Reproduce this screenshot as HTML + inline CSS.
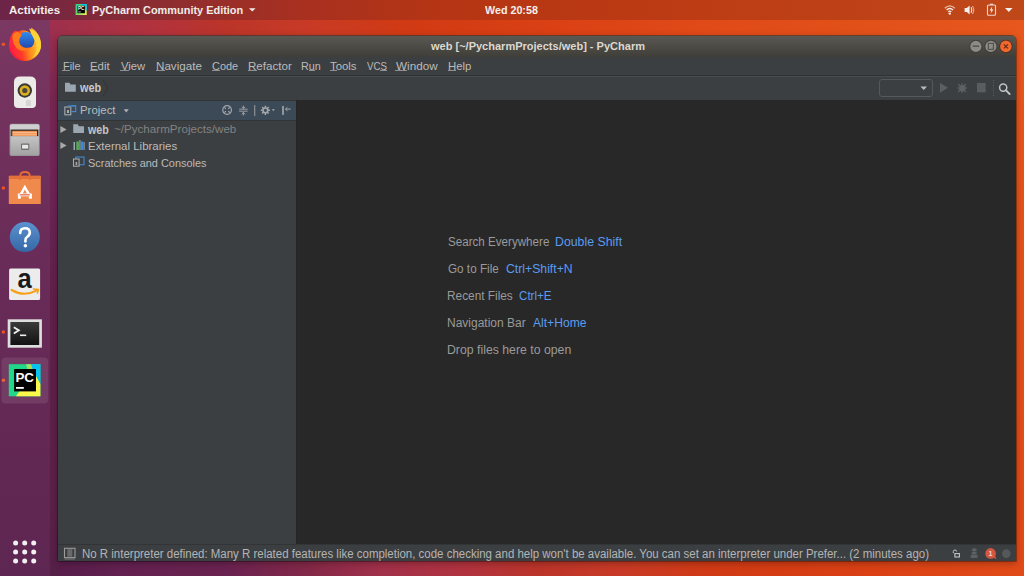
<!DOCTYPE html>
<html><head><meta charset="utf-8">
<style>
*{margin:0;padding:0;box-sizing:border-box}
html,body{width:1024px;height:576px;overflow:hidden}
body{position:relative;font-family:"Liberation Sans",sans-serif;
background:linear-gradient(60deg,#4e1a46 0%,#642150 10%,#6a2250 17%,#842848 23%,#a0304a 28%,#b03240 34%,#bb3429 40%,#c83a26 46%,#d03a14 53%,#da4014 64%,#e04a18 75%,#e2521a 90%,#e8581e 100%);}
.a{position:absolute}
.t{position:absolute;white-space:nowrap;line-height:1;transform-origin:0 0}
#topbar{left:0;top:0;width:1024px;height:20px;background:linear-gradient(90deg,#6c2448 0px,#8a2c32 150px,#a83020 300px,#b53514 440px,#bd3c14 700px,#bf4819 1024px)}
#lstrip{left:50px;top:20px;width:8px;height:556px;background:linear-gradient(#a2304d 0px,#8c2a50 40px,#782650 80px,#742558 137px,#652250 230px,#612048 280px,#5c2048 480px,#552048 556px)}
#dock{left:0;top:20px;width:50px;height:556px;background:linear-gradient(#7a3862,#6a2c58 40%,#5e2652)}
#win{left:58px;top:36px;width:958px;height:525px;background:#3c3f41;border-radius:5px 5px 0 0;box-shadow:0 0 0 1px rgba(0,0,0,0.28),0 2px 7px rgba(0,0,0,0.3)}
#title{left:58px;top:36px;width:958px;height:21px;background:linear-gradient(#5a5852,#3f3e39);border-radius:4px 4px 0 0}
#ttop{left:61px;top:35px;width:952px;height:1px;background:rgba(70,68,62,0.55)}
#menu{left:58px;top:57px;width:958px;height:19px;background:#3c3f41;border-bottom:1px solid #2f3132}
#nav{left:58px;top:76px;width:958px;height:24px;background:#3c3f41;border-top:1px solid #4a4c4d}
#projhdr{left:58px;top:100px;width:238px;height:21px;background:#3c4957;border-top:1px solid #333537;border-bottom:1px solid #323436}
#proj{left:58px;top:121px;width:238px;height:423px;background:#3c3f41}
#editor{left:296px;top:100px;width:720px;height:444px;background:#282828;border-left:1px solid #242626}
#status{left:58px;top:544px;width:958px;height:17px;background:#3c3f41;border-top:1px solid #323435}
</style></head><body>
<div id="topbar" class="a"></div>
<div id="lstrip" class="a"></div>
<div id="dock" class="a"></div>
<div id="win" class="a"></div>
<div id="title" class="a"></div>
<div id="ttop" class="a"></div>
<div id="menu" class="a"></div>
<div id="nav" class="a"></div>
<div id="projhdr" class="a"></div>
<div id="proj" class="a"></div>
<div id="editor" class="a"></div>
<div id="status" class="a"></div>
<svg class="a" style="left:0;top:0" width="1024" height="576" viewBox="0 0 1024 576">
<defs>
<linearGradient id="ffg" x1="0" y1="0.6" x2="1" y2="0.4">
<stop offset="0" stop-color="#ff1f45"/><stop offset="0.35" stop-color="#ff3a2a"/><stop offset="0.6" stop-color="#ff8a1a"/><stop offset="1" stop-color="#ffd83a"/></linearGradient>
<linearGradient id="blu" x1="0" y1="0" x2="0" y2="1"><stop offset="0" stop-color="#2f8cf0"/><stop offset="1" stop-color="#2244a8"/></linearGradient>
<linearGradient id="helpg" x1="0" y1="0" x2="0" y2="1"><stop offset="0" stop-color="#5c92cf"/><stop offset="1" stop-color="#3467a6"/></linearGradient>
<linearGradient id="pcg" x1="0" y1="0" x2="1" y2="1"><stop offset="0" stop-color="#21d789"/><stop offset="0.5" stop-color="#6fd66a"/><stop offset="1" stop-color="#fcf84a"/></linearGradient>
<linearGradient id="termg" x1="0" y1="0" x2="0" y2="1"><stop offset="0" stop-color="#3a3a3a"/><stop offset="1" stop-color="#121212"/></linearGradient>
<linearGradient id="filesg" x1="0" y1="0" x2="0" y2="1"><stop offset="0" stop-color="#c4c4c4"/><stop offset="1" stop-color="#a2a2a2"/></linearGradient>
</defs>
<!-- dock running dots -->
<g fill="#e95420">
<circle cx="3.4" cy="44.3" r="1.8"/><circle cx="3.4" cy="188" r="1.8"/><circle cx="3.4" cy="332" r="1.8"/><circle cx="3.4" cy="380.2" r="1.8"/>
</g>
<!-- firefox -->
<g>
<path d="M12.5 33 C10 37 9 41 9 45 A16 16 0 0 0 41 45 C41 37 37 31 31 27.5 C32 31 31.5 33 30 33 C27 30 22 29.5 18.5 31.5 C16 30 14 30.5 12.5 33 Z" fill="url(#ffg)"/>
<circle cx="26" cy="40.5" r="8.5" fill="url(#blu)"/>
<path d="M29 28.5 C36 31 41 37 41 45 C41 51 37 56 32 58 C37 53 38 46 35 41 C33 37 31 33 29 28.5 Z" fill="#ffd23a"/>
<path d="M12.5 35 C14.5 32 17 31.5 19 32.5 C20.5 34 22.5 34.5 21 36.5 C19 38.5 18.5 42 20.5 45 C23 48 28 48.5 31 47 C28.5 50.5 23 52 18.5 49.5 C14.5 47 12 41 12.5 35 Z" fill="#ff7a1a"/>
<path d="M9.5 42 C10 52 16 58 24 60.5 C16 60 10 54 9.2 46 Z" fill="#ff1a3a"/>
</g>
<!-- rhythmbox -->
<g>
<path d="M14 82 Q14 76.5 20 76.5 L30 76.5 Q36 76.5 36 82 L36 104 Q36 108 32 108 L18 108 Q14 108 14 104 Z" fill="#ecebea"/>
<circle cx="24.8" cy="90.5" r="7.2" fill="#3a3834"/>
<circle cx="24.8" cy="90.5" r="5.2" fill="#d8b020"/>
<circle cx="24.8" cy="90.5" r="2.6" fill="#4a4640"/>
<rect x="26" y="100" width="5" height="6" rx="1" fill="#d6d5d3"/>
</g>
<!-- files -->
<g>
<rect x="9.5" y="123.8" width="30.3" height="32.2" rx="2" fill="#8e8e8e"/>
<rect x="10" y="124.2" width="29.3" height="5.6" rx="1.6" fill="#cfcfcf"/>
<rect x="11.3" y="129.6" width="26.7" height="6.8" fill="#2e2622"/>
<rect x="12.3" y="130.8" width="24.7" height="5.6" fill="#f09050"/>
<rect x="12.3" y="132.4" width="24.7" height="0.8" fill="#fbd2b0"/>
<rect x="12.3" y="134.4" width="24.7" height="0.8" fill="#f8c098"/>
<rect x="10.4" y="136.2" width="28.5" height="19.2" fill="url(#filesg)"/>
<rect x="21" y="143.4" width="8.3" height="6.6" rx="1.2" fill="#6e6e6e"/>
<rect x="22.1" y="144.8" width="6.1" height="3.8" fill="#e8e8e8"/>
</g>
<!-- software -->
<g>
<rect x="8.8" y="176" width="32" height="28" fill="#f08a4c"/>
<rect x="9.3" y="175.6" width="31" height="3.4" fill="#e2703a"/>
<path d="M20.2 180 L20.2 176 Q20.2 172 25 172 Q29.8 172 29.8 176 L29.8 180" fill="none" stroke="#e66c34" stroke-width="1.8"/>
<path d="M19.6 194 L24.8 184.8 L30.2 194 L27.2 194 L24.8 189.4 L22.6 194 Z" fill="#fff"/>
<rect x="17.8" y="193.6" width="14.2" height="2.6" rx="0.6" fill="#fff"/>
<rect x="19.8" y="194.3" width="10" height="1.1" fill="#e85030"/>
<rect x="17.8" y="196" width="3.2" height="2.8" rx="1" fill="#fff"/>
<rect x="28.8" y="196" width="3.2" height="2.8" rx="1" fill="#fff"/>
</g>
<!-- help -->
<g>
<circle cx="24.8" cy="237.1" r="15" fill="url(#helpg)"/>
<path d="M20.2 233 Q20.2 228.3 25 228.3 Q29.8 228.3 29.8 232.6 Q29.8 235.3 27 237 Q25.4 238 25.4 240.5 L25.4 241.5" fill="none" stroke="#fff" stroke-width="2.6" stroke-linecap="round"/>
<circle cx="25.4" cy="245.8" r="1.8" fill="#fff"/>
</g>
<!-- amazon -->
<g>
<rect x="9.1" y="268.6" width="31" height="31.4" rx="1.5" fill="#ececec"/>
<text x="17.6" y="288.4" font-family="Liberation Sans" font-weight="bold" font-size="28" textLength="14.2" lengthAdjust="spacingAndGlyphs" fill="#1a1a1a">a</text>
<path d="M11.6 290 Q24 297.2 36.4 290.6" fill="none" stroke="#f7a11a" stroke-width="2.2" stroke-linecap="round"/>
<path d="M33.5 289 L38.3 289.5 L37.5 293" fill="none" stroke="#f7a11a" stroke-width="1.6" stroke-linecap="round"/>
</g>
<!-- terminal -->
<g>
<rect x="7.7" y="319.3" width="34.2" height="28.4" fill="#dedede"/>
<rect x="10.4" y="322" width="28.8" height="23" fill="url(#termg)"/>
<path d="M13.8 327.2 L18.8 330.3 L13.8 333.4" fill="none" stroke="#f0f0f0" stroke-width="1.8"/>
<rect x="20" y="334.5" width="6.2" height="1.6" fill="#f0f0f0"/>
</g>
<!-- pycharm active -->
<rect x="1.5" y="357.4" width="46.7" height="46.2" rx="4" fill="#ffffff" fill-opacity="0.09"/>
<g>
<rect x="8.8" y="364.2" width="31.6" height="32.1" fill="#21d789"/>
<path d="M26 364.2 L40.4 364.2 L40.4 384 L33 371 Z" fill="#07c3f2"/>
<path d="M33 371 L40.4 384 L40.4 396.3 L16 396.3 Z" fill="#fcf84a"/>
<path d="M26 364.2 L31 364.2 L33 371 L28.5 372 Z" fill="#a8e05a"/>
<rect x="14.1" y="369" width="21.9" height="22.4" fill="#000"/>
<text x="15.4" y="382" font-family="Liberation Sans" font-weight="bold" font-size="13.6" fill="#fff" textLength="18.6" lengthAdjust="spacingAndGlyphs">PC</text>
<rect x="16" y="387" width="7.8" height="1.8" fill="#fff"/>
</g>
<!-- app grid -->
<g fill="#f4f0f2">
<circle cx="15.6" cy="543" r="2.5"/><circle cx="24.7" cy="543" r="2.5"/><circle cx="33.7" cy="543" r="2.5"/>
<circle cx="15.6" cy="552" r="2.5"/><circle cx="24.7" cy="552" r="2.5"/><circle cx="33.7" cy="552" r="2.5"/>
<circle cx="15.6" cy="561" r="2.5"/><circle cx="24.7" cy="561" r="2.5"/><circle cx="33.7" cy="561" r="2.5"/>
</g>
<!-- topbar icons -->
<g>
<rect x="75.6" y="4" width="11.1" height="11" fill="url(#pcg)"/>
<path d="M81.5 4 L86.7 4 L86.7 11 Z" fill="#07c3f2"/>
<rect x="77.5" y="5.8" width="7.4" height="7.4" fill="#000"/>
<text x="78" y="10.3" font-family="Liberation Sans" font-weight="bold" font-size="4.6" fill="#fff">PC</text>
<rect x="78.2" y="11.6" width="2.6" height="0.7" fill="#fff"/>
<path d="M249 8.2 L255.6 8.2 L252.3 11.6 Z" fill="#f0ece8"/>
<!-- wifi -->
<path d="M944.8 8.2 Q949.8 3.6 954.8 8.2" fill="none" stroke="#f2e6e0" stroke-width="1.3" opacity="0.75"/>
<path d="M946.6 10 Q949.8 7.2 953 10" fill="none" stroke="#f2eeea" stroke-width="1.4"/>
<path d="M948.3 11.7 Q949.8 10.5 951.3 11.7" fill="none" stroke="#f2eeea" stroke-width="1.4"/>
<circle cx="949.8" cy="13.6" r="1.2" fill="#f2eeea"/>
<!-- speaker -->
<path d="M964.6 8 L966.8 8 L969.6 5.4 L969.6 14.6 L966.8 12 L964.6 12 Z" fill="#f4f0ec"/>
<path d="M971 7.3 Q972.6 10 971 12.7" fill="none" stroke="#f4f0ec" stroke-width="1.1"/>
<path d="M972.6 6 Q975.2 10 972.6 14" fill="none" stroke="#eedad0" stroke-width="1.0" opacity="0.8"/>
<!-- battery -->
<rect x="987.5" y="5" width="8" height="10.2" rx="1" fill="none" stroke="#efd8cc" stroke-width="1.1"/>
<rect x="990" y="3.7" width="3" height="1.4" fill="#efd8cc"/>
<path d="M992.3 6.5 L989.6 10.5 L991.4 10.5 L990.6 13.6 L993.5 9.4 L991.7 9.4 Z" fill="#f4f0ec"/>
<path d="M1005 8 L1012.6 8 L1008.8 12 Z" fill="#f4f0ec"/>
</g>
<!-- window buttons -->
<g>
<circle cx="975.9" cy="46.4" r="6.6" fill="#3e3d38"/>
<circle cx="975.9" cy="46.4" r="5.6" fill="#8c8b86"/>
<rect x="972.6" y="45.4" width="6.6" height="1.6" fill="#5a5955"/>
<circle cx="990.9" cy="46.4" r="6.6" fill="#3e3d38"/>
<circle cx="990.9" cy="46.4" r="5.6" fill="#8c8b86"/>
<rect x="988.4" y="43.4" width="5" height="6" fill="none" stroke="#555450" stroke-width="1.2"/>
<circle cx="1005.9" cy="46.4" r="6.6" fill="#4a2a20"/>
<circle cx="1005.9" cy="46.4" r="5.8" fill="#f0682c"/>
<path d="M1003.9 44.4 L1007.9 48.4 M1007.9 44.4 L1003.9 48.4" stroke="#6a2a20" stroke-width="1.2"/>
</g>
<!-- nav bar -->
<g>
<path d="M65 82.7 L69.5 82.7 L70.5 84.5 L75.8 84.5 L75.8 91.8 L65 91.8 Z" fill="#9aa7b0"/>
<path d="M103 79.5 L107.7 88 L103 96.5" fill="none" stroke="#313335" stroke-width="1"/>
<rect x="879.5" y="79.5" width="53" height="17" rx="2.5" fill="#3c3f41" stroke="#56595b" stroke-width="1"/>
<path d="M920.5 86.5 L927 86.5 L923.75 90 Z" fill="#bbbbbb"/>
<path d="M940 83 L948 87.8 L940 92.7 Z" fill="#5c5e60"/>
<g stroke="#5e6062" stroke-width="1.1">
<path d="M958 84 L966 92 M966 84 L958 92 M962 83 L962 93 M957 88 L967 88"/>
</g>
<circle cx="962.3" cy="88.2" r="3.2" fill="#5e6062"/>
<rect x="977" y="83" width="8.7" height="9.3" fill="#5a5c5e"/>
<path d="M993.5 80 L993.5 96.7" stroke="#5a5d5f" stroke-width="1" stroke-dasharray="1 1.5"/>
<circle cx="1003.2" cy="87.6" r="3.6" fill="none" stroke="#c2c2c2" stroke-width="1.5"/>
<path d="M1005.8 90.2 L1009.6 94" stroke="#c2c2c2" stroke-width="1.9" stroke-linecap="round"/>
</g>
<!-- project header -->
<g>
<rect x="64.8" y="107" width="6" height="7.8" fill="none" stroke="#a8a8a8" stroke-width="1.1"/>
<rect x="67" y="110" width="2" height="3" fill="#a8a8a8"/>
<path d="M71.5 105.8 L75.7 105.8 L75.7 111.6 L71.5 111.6" fill="none" stroke="#4a8ad0" stroke-width="1.1"/>
<rect x="68" y="105.4" width="8" height="1.2" fill="#4a8ad0"/>
<path d="M123.7 109.2 L128.8 109.2 L126.25 112.4 Z" fill="#b0b0b0"/>
<circle cx="227.1" cy="110" r="4.3" fill="none" stroke="#a4a8ac" stroke-width="1.2"/>
<path d="M224.4 107.3 L225.9 108.8 M229.8 107.3 L228.3 108.8 M224.4 112.7 L225.9 111.2 M229.8 112.7 L228.3 111.2" stroke="#a4a8ac" stroke-width="1.2"/>
<path d="M239.2 109.2 L247.6 109.2 M239.2 111.2 L247.6 111.2 M243.4 105.6 L243.4 108.3 M243.4 112.1 L243.4 115.6 M241.7 106.9 L243.4 108.5 L245.1 106.9 M241.7 114.3 L243.4 112.6 L245.1 114.3" fill="none" stroke="#a4a8ac" stroke-width="0.9"/>
<path d="M254.7 105 L254.7 116" stroke="#8e9296" stroke-width="1.2"/>
<circle cx="265.4" cy="110.3" r="2.4" fill="none" stroke="#a4a8ac" stroke-width="1.5"/>
<path d="M268.00 110.30 L270.00 110.30 M267.24 112.14 L268.65 113.55 M265.40 112.90 L265.40 114.90 M263.56 112.14 L262.15 113.55 M262.80 110.30 L260.80 110.30 M263.56 108.46 L262.15 107.05 M265.40 107.70 L265.40 105.70 M267.24 108.46 L268.65 107.05 " stroke="#a4a8ac" stroke-width="1.5"/>
<path d="M271.8 109.3 L274.8 109.3 L273.3 111.2 Z" fill="#a4a8ac"/>
<rect x="282.2" y="106" width="1.6" height="8.9" fill="#a4a8ac"/>
<path d="M285.5 109.1 L290.7 109.1 M287.4 107.3 L285.5 109.1 L287.4 110.9" fill="none" stroke="#a4a8ac" stroke-width="1"/>
</g>
<!-- tree -->
<g>
<path d="M60.4 126 L66.6 129.5 L60.4 133 Z" fill="#a9a9a9"/>
<path d="M60.4 142.1 L66.6 145.6 L60.4 149.1 Z" fill="#a9a9a9"/>
<path d="M73.2 124.3 L77.8 124.3 L78.8 126.2 L84 126.2 L84 133 L73.2 133 Z" fill="#9aa7b0"/>
<rect x="73.5" y="142" width="1.5" height="8" fill="#9aa7b0"/>
<rect x="76.3" y="141.5" width="2.6" height="8.5" fill="#58a858"/>
<rect x="79.4" y="140" width="1.1" height="10" fill="#9aa7b0"/>
<rect x="80.8" y="141.5" width="2.4" height="8.5" fill="#3a8ad8"/>
<rect x="83.6" y="142" width="1" height="8" fill="#9aa7b0"/>
<rect x="75.8" y="157" width="8.2" height="7.7" fill="none" stroke="#3f8ad0" stroke-width="1.1"/>
<rect x="73.5" y="159" width="5.6" height="7.2" fill="#3c3f41" stroke="#a9a9a9" stroke-width="1.1"/>
<rect x="75.6" y="162" width="1.6" height="3" fill="#a9a9a9"/>
</g>
<!-- status bar -->
<g>
<rect x="64.5" y="548.3" width="10.5" height="9.3" fill="none" stroke="#9a9a9a" stroke-width="1.1"/>
<rect x="67.3" y="549.2" width="5" height="7.5" fill="#6a6a6a"/>
<rect x="64.5" y="558.6" width="10.5" height="0.8" fill="#8a8a8a"/>
<path d="M953.3 553.2 L953.3 551.6 Q953.3 550 955 550 Q956.7 550 956.7 551.5" fill="none" stroke="#c4c4c4" stroke-width="1"/>
<rect x="954.9" y="553.6" width="4.5" height="3.4" fill="none" stroke="#c4c4c4" stroke-width="1.1"/>
<circle cx="974.2" cy="549.9" r="1.8" fill="#606264"/>
<rect x="971.3" y="549.6" width="5.8" height="1" fill="#606264"/>
<rect x="971.8" y="552" width="4.8" height="2.6" fill="#5e6062"/>
<rect x="970.8" y="555" width="6.8" height="3" fill="#5c5e60"/>
<circle cx="990.6" cy="553.4" r="5.3" fill="#d5563f"/>
<path d="M993 557.5 L996.6 559.2 L994.8 555.6 Z" fill="#d5563f"/>
<text x="990.4" y="556.2" font-family="Liberation Sans" font-weight="bold" font-size="7" text-anchor="middle" fill="#f0d8d0">1</text>
<circle cx="1006.3" cy="553.6" r="4.3" fill="#55585a"/>
</g>
</svg>

<span class="t" style="left:9.30px;top:4.69px;font-size:11px;font-weight:bold;color:#f2eeea;transform:scaleX(1.0453)">Activities</span>
<span class="t" style="left:92.00px;top:4.59px;font-size:11px;font-weight:bold;color:#f0ece8;transform:scaleX(0.9937)">PyCharm Community Edition</span>
<span class="t" style="left:485.40px;top:5.21px;font-size:10.5px;font-weight:bold;color:#f4f0ec;transform:scaleX(1.0211)">Wed 20:58</span>
<span class="t" style="left:430.76px;top:41.47px;font-size:11.5px;font-weight:bold;color:#dcd8d0;transform:scaleX(0.9579)">web [~/PycharmProjects/web] - PyCharm</span>
<div class="a" style="left:62.40px;top:70.4px;width:7.26px;height:1.1px;background:#8e9092"></div>
<span class="t" style="left:62.70px;top:61.47px;font-size:11.5px;color:#bbbbbb;transform:scaleX(0.9485)">File</span>
<div class="a" style="left:89.90px;top:70.4px;width:8.19px;height:1.1px;background:#8e9092"></div>
<span class="t" style="left:90.20px;top:61.47px;font-size:11.5px;color:#bbbbbb;transform:scaleX(0.9893)">Edit</span>
<div class="a" style="left:120.40px;top:70.4px;width:8.12px;height:1.1px;background:#8e9092"></div>
<span class="t" style="left:120.70px;top:61.47px;font-size:11.5px;color:#bbbbbb;transform:scaleX(0.9798)">View</span>
<div class="a" style="left:156.10px;top:70.4px;width:9.00px;height:1.1px;background:#8e9092"></div>
<span class="t" style="left:156.40px;top:61.47px;font-size:11.5px;color:#bbbbbb;transform:scaleX(1.0113)">Navigate</span>
<div class="a" style="left:211.90px;top:70.4px;width:8.51px;height:1.1px;background:#8e9092"></div>
<span class="t" style="left:212.20px;top:61.47px;font-size:11.5px;color:#bbbbbb;transform:scaleX(0.9522)">Code</span>
<div class="a" style="left:247.80px;top:70.4px;width:8.97px;height:1.1px;background:#8e9092"></div>
<span class="t" style="left:248.10px;top:61.47px;font-size:11.5px;color:#bbbbbb;transform:scaleX(1.0084)">Refactor</span>
<div class="a" style="left:308.58px;top:70.4px;width:6.59px;height:1.1px;background:#8e9092"></div>
<span class="t" style="left:301.10px;top:61.47px;font-size:11.5px;color:#bbbbbb;transform:scaleX(0.9372)">Run</span>
<div class="a" style="left:329.90px;top:70.4px;width:7.55px;height:1.1px;background:#8e9092"></div>
<span class="t" style="left:330.20px;top:61.47px;font-size:11.5px;color:#bbbbbb;transform:scaleX(0.9891)">Tools</span>
<div class="a" style="left:379.93px;top:70.4px;width:7.09px;height:1.1px;background:#8e9092"></div>
<span class="t" style="left:366.70px;top:61.47px;font-size:11.5px;color:#bbbbbb;transform:scaleX(0.8467)">VCS</span>
<div class="a" style="left:395.40px;top:70.4px;width:11.64px;height:1.1px;background:#8e9092"></div>
<span class="t" style="left:395.70px;top:61.47px;font-size:11.5px;color:#bbbbbb;transform:scaleX(1.0169)">Window</span>
<div class="a" style="left:447.60px;top:70.4px;width:8.81px;height:1.1px;background:#8e9092"></div>
<span class="t" style="left:447.90px;top:61.47px;font-size:11.5px;color:#bbbbbb;transform:scaleX(0.9890)">Help</span>
<span class="t" style="left:79.91px;top:82.14px;font-size:12px;font-weight:bold;color:#c8c8c8;transform:scaleX(0.9080)">web</span>
<span class="t" style="left:79.90px;top:105.27px;font-size:11.5px;color:#bbbbbb;transform:scaleX(0.9919)">Project</span>
<span class="t" style="left:88.39px;top:124.04px;font-size:12px;font-weight:bold;color:#c4c4c4;transform:scaleX(0.8914)">web</span>
<span class="t" style="left:114.40px;top:124.47px;font-size:11.5px;color:#828282;transform:scaleX(1.0098)">~/PycharmProjects/web</span>
<span class="t" style="left:87.50px;top:141.07px;font-size:11.5px;color:#bbbbbb;transform:scaleX(0.9963)">External Libraries</span>
<span class="t" style="left:87.50px;top:157.57px;font-size:11.5px;color:#bbbbbb;transform:scaleX(0.9507)">Scratches and Consoles</span>
<span class="t" style="left:447.80px;top:236.42px;font-size:12.5px;color:#9a9a9a;transform:scaleX(0.9292)">Search Everywhere</span>
<span class="t" style="left:555.42px;top:236.42px;font-size:12.5px;color:#5a9cf0;transform:scaleX(0.9849)">Double Shift</span>
<span class="t" style="left:447.80px;top:263.22px;font-size:12.5px;color:#9a9a9a;transform:scaleX(0.9367)">Go to File</span>
<span class="t" style="left:505.60px;top:263.22px;font-size:12.5px;color:#5a9cf0;transform:scaleX(0.9787)">Ctrl+Shift+N</span>
<span class="t" style="left:446.85px;top:290.22px;font-size:12.5px;color:#9a9a9a;transform:scaleX(0.9469)">Recent Files</span>
<span class="t" style="left:519.20px;top:290.22px;font-size:12.5px;color:#5a9cf0;transform:scaleX(0.9298)">Ctrl+E</span>
<span class="t" style="left:446.84px;top:317.02px;font-size:12.5px;color:#9a9a9a;transform:scaleX(0.9589)">Navigation Bar</span>
<span class="t" style="left:532.70px;top:317.02px;font-size:12.5px;color:#5a9cf0;transform:scaleX(0.9678)">Alt+Home</span>
<span class="t" style="left:446.82px;top:344.22px;font-size:12.5px;color:#9a9a9a;transform:scaleX(0.9824)">Drop files here to open</span>
<span class="t" style="left:81.50px;top:547.74px;font-size:12px;color:#b4b4b4;transform:scaleX(0.9558)">No R interpreter defined: Many R related features like completion, code checking and help won't be available. You can set an interpreter under Prefer... (2 minutes ago)</span>
</body></html>
